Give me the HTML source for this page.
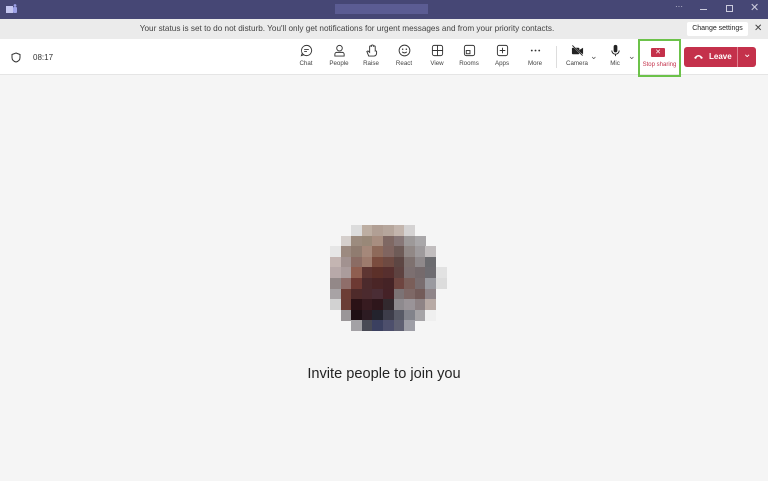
<!DOCTYPE html>
<html><head><meta charset="utf-8"><style>
*{margin:0;padding:0;box-sizing:border-box}
body{width:768px;height:481px;overflow:hidden;background:#f5f5f5;font-family:"Liberation Sans",sans-serif;position:relative}
.tb{position:absolute;left:0;top:0;width:768px;height:19px;background:#464775}
.nb{position:absolute;left:0;top:19px;width:768px;height:20px;background:#ebebeb;font-size:8px;color:#424242;line-height:20px}
.bar{position:absolute;left:0;top:39px;width:768px;height:36px;background:#fff;border-bottom:1px solid #e5e5e5}
.it{position:absolute;top:44px;width:32px;text-align:center;font-size:6.2px;color:#424242}
.it svg{display:block;margin:0 auto 3px;width:13px;height:13px}
.ab{position:absolute;font-size:6.2px;color:#424242}
.mos{position:absolute;left:330px;top:225px}
.mos div{position:absolute;width:11px;height:11px}
</style></head><body>
<div class="tb">
<svg style="position:absolute;left:6px;top:4px" width="12" height="11"><rect x="0" y="2" width="7" height="7" fill="#c4c6f0"/><rect x="7" y="3" width="4" height="6" rx="1" fill="#9ea2e8"/><circle cx="9" cy="1.5" r="1.4" fill="#9ea2e8"/></svg>
<div style="position:absolute;left:335px;top:4px;width:93px;height:10px;background:#6465a0;opacity:.7"></div>
<div style="position:absolute;left:675px;top:2px;font-size:8px;color:#ccd">···</div>
<div style="position:absolute;left:700px;top:9px;width:7px;height:1px;background:#ccd"></div>
<div style="position:absolute;left:726px;top:5px;width:7px;height:7px;border:1px solid #ccd"></div>
<div style="position:absolute;left:750px;top:1px;font-size:11px;color:#ccd">✕</div>
</div>
<div class="nb"><div style="position:absolute;left:0;width:694px;text-align:center;font-size:8.2px">Your status is set to do not disturb. You'll only get notifications for urgent messages and from your priority contacts.</div>
<div style="position:absolute;left:687px;top:3px;width:61px;height:14px;background:#fff;border-radius:2px;font-size:7px;color:#222;line-height:14px;text-align:center">Change settings</div>
<div style="position:absolute;left:754px;top:0;font-size:10px;color:#444">✕</div>
</div>
<div class="bar"></div>
<svg style="position:absolute;left:11px;top:52px" width="10" height="11" viewBox="0 0 10 11"><path d="M5 1 L9 2.5 V5.5 C9 8 7 9.5 5 10 C3 9.5 1 8 1 5.5 V2.5 Z" fill="none" stroke="#333" stroke-width="1"/></svg>
<div style="position:absolute;left:33px;top:53px;font-size:8px;color:#333">08:17</div>
<div class="it" style="left:290px"><svg viewBox="0 0 14 14"><path d="M7 1.5a5.5 5.5 0 1 1-4.6 8.5L1.5 12.5l2.6-.9A5.5 5.5 0 0 1 7 1.5z" fill="none" stroke="#333"/><path d="M4.5 6h5M4.5 8h3" stroke="#333"/></svg>Chat</div>
<div class="it" style="left:323px"><svg viewBox="0 0 14 14"><circle cx="7" cy="4.5" r="3" fill="none" stroke="#333"/><path d="M2 13v-2a2 2 0 0 1 2-2h6a2 2 0 0 1 2 2v2z" fill="none" stroke="#333"/></svg>People</div>
<div class="it" style="left:355px"><svg viewBox="0 0 14 14"><path d="M4 13l-2-5 1.2-.6L5 9V3a1 1 0 0 1 2 0V2a1 1 0 0 1 2 0v1a1 1 0 0 1 2 0v4.5a1 1 0 0 1 1.5.8V10a3 3 0 0 1-3 3z" fill="none" stroke="#333"/></svg>Raise</div>
<div class="it" style="left:388px"><svg viewBox="0 0 14 14"><circle cx="7" cy="7" r="5.8" fill="none" stroke="#333"/><circle cx="5" cy="5.6" r=".8" fill="#333"/><circle cx="9" cy="5.6" r=".8" fill="#333"/><path d="M4.5 8.5q2.5 2.2 5 0" fill="none" stroke="#333"/></svg>React</div>
<div class="it" style="left:421px"><svg viewBox="0 0 14 14"><rect x="1.5" y="1.5" width="11" height="11" rx="2" fill="none" stroke="#333"/><path d="M7 1.5v11M1.5 7h11" stroke="#333"/></svg>View</div>
<div class="it" style="left:453px"><svg viewBox="0 0 14 14"><rect x="1.5" y="1.5" width="11" height="11" rx="2" fill="none" stroke="#333"/><rect x="3.5" y="7" width="4" height="3.5" fill="none" stroke="#333"/></svg>Rooms</div>
<div class="it" style="left:486px"><svg viewBox="0 0 14 14"><rect x="1.5" y="1.5" width="11" height="11" rx="2" fill="none" stroke="#333"/><path d="M7 4v6M4 7h6" stroke="#333"/></svg>Apps</div>
<div class="it" style="left:519px"><svg viewBox="0 0 14 14"><circle cx="3" cy="7" r="1" fill="#333"/><circle cx="7" cy="7" r="1" fill="#333"/><circle cx="11" cy="7" r="1" fill="#333"/></svg>More</div>
<div style="position:absolute;left:556px;top:46px;width:1px;height:22px;background:#ddd"></div>
<div class="it" style="left:561px"><svg viewBox="0 0 14 14"><rect x="1" y="4" width="8" height="7" rx="1" fill="#222"/><path d="M9 6.5l4-2.5v7l-4-2.5z" fill="#222"/><path d="M1 1l12 12" stroke="#fff" stroke-width="1.5"/><path d="M1.5 1.5l11 11" stroke="#222"/></svg>Camera</div>
<div class="ab" style="left:590px;top:51px;font-size:9px;color:#555">⌄</div>
<div class="it" style="left:599px"><svg viewBox="0 0 14 14"><rect x="5" y="1" width="4" height="8" rx="2" fill="#222"/><path d="M3 7a4 4 0 0 0 8 0M7 11v2" fill="none" stroke="#222"/></svg>Mic</div>
<div class="ab" style="left:628px;top:51px;font-size:9px;color:#555">⌄</div>
<div style="position:absolute;left:638px;top:39px;width:43px;height:38px;border:2.5px solid #6cc24a"></div>
<div style="position:absolute;left:651px;top:48px;width:14px;height:9px;background:#c4314b;border-radius:1px;color:#fff;font-size:7px;line-height:9px;text-align:center">✕</div>
<div style="position:absolute;left:639px;top:62px;width:41px;text-align:center;font-size:6px;color:#c4314b">Stop sharing</div>
<div style="position:absolute;left:684px;top:47px;width:72px;height:20px;background:#c4314b;border-radius:3px"></div>
<div style="position:absolute;left:737px;top:47px;width:1px;height:20px;background:#e08090"></div>
<svg style="position:absolute;left:693px;top:53px" width="11" height="7" viewBox="0 0 11 7"><path d="M1 5 Q5.5 -1 10 5 L8 6 L7 4 Q5.5 3 4 4 L3 6Z" fill="#fff"/></svg>
<div style="position:absolute;left:709px;top:52px;font-size:8px;font-weight:bold;color:#fff">Leave</div>
<div style="position:absolute;left:743px;top:49px;font-size:10px;color:#fff">⌄</div>
<div class="mos" id="m"></div>
<div style="position:absolute;left:0;top:366px;width:768px;text-align:center;font-size:14.6px;color:#242424">Invite people to join you</div>
<script>
var g=[
[0,0,'#dcdcdc','#bdaea2','#b19f94','#b6a69c','#c3b5ad','#d4d2d2',0,0,0],
[0,'#d5cfcc','#9c8b7e','#998878','#a88e80','#7f6863','#877777','#9d9999','#a9a7a9',0,0],
['#e6e6e6','#9c8a80','#907c70','#a5887a','#8e6a5a','#806560','#6e5b57','#918886','#9e9a9c','#c1bdbe',0],
['#c4b5b2','#a29290','#8b6c64','#9d7b6d','#7a4c3e','#6e4a42','#5d4643','#7e716f','#8f898b','#6b6b6f',0],
['#b8a9a9','#ab9c9c','#8f5e50','#5e3532','#5c3029','#572f2e','#5e4240','#7c6f70','#756a6c','#6e6c71','#e2e2e2'],
['#938888','#8f6e6a','#6d3933','#4c2a2c','#4a2526','#452326','#6e4540','#7a5e59','#796d6f','#9a9aa0','#dcdcdc'],
['#a8a3a5','#6c3d35','#4e2a2a','#4b2a2e','#4a2d35','#452227','#7c7375','#7e6866','#735b59','#8f8589',0],
['#d2d2d2','#6a3d36','#2b1216','#371b20','#2e161b','#32292e','#8e8a8e','#9a9498','#8e8385','#b8aaa5',0],
[0,'#9a9698','#1e0f14','#2c1b22','#23232d','#3d3d4a','#585a66','#82838b','#a6a4a7','#efefef',0],
[0,0,'#a3a1a5','#494a55','#3b4060','#4d4f6c','#5f6072','#9e9ea6',0,0,0]];
var m=document.getElementById('m'),h='';
g.forEach(function(r,y){r.forEach(function(c,x){if(c)h+='<div style="left:'+Math.round(x*10.6)+'px;top:'+Math.round(y*10.6)+'px;background:'+c+'"></div>'})});
m.innerHTML=h;
</script>
</body></html>
